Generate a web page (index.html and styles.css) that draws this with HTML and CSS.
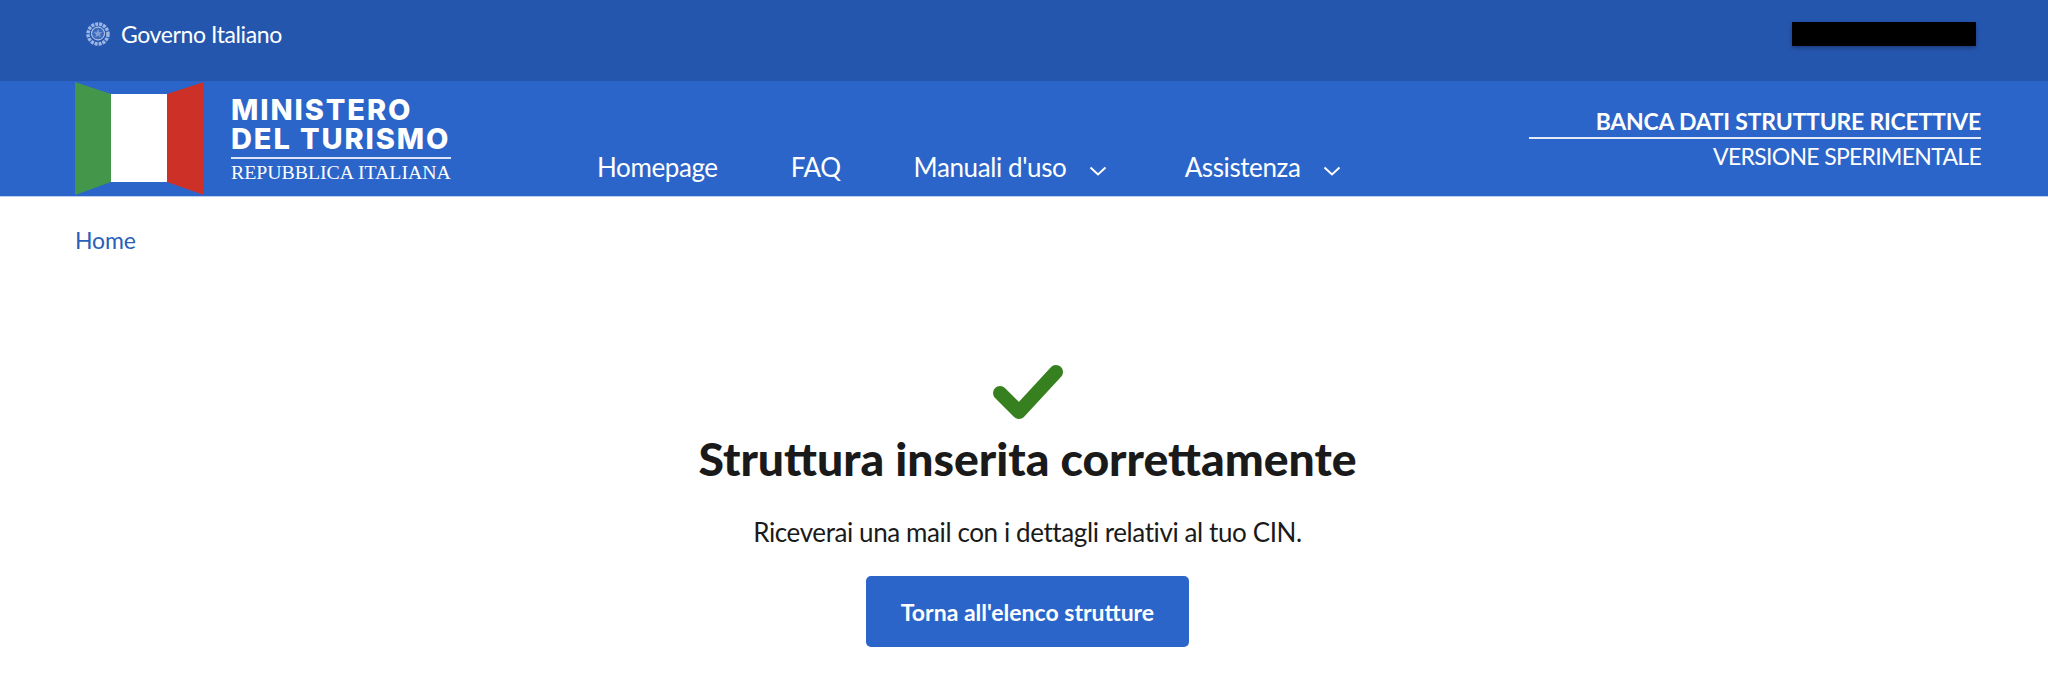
FILE: index.html
```html
<!DOCTYPE html>
<html lang="it">
<head>
    <meta charset="UTF-8">
    <meta name="viewport" content="width=device-width, initial-scale=1.0">
    <title>Ministero del Turismo</title>
    <link rel="stylesheet" href="styles.css">
</head>
<body>
    <div class="topbar">
        <div class="governo">
            <svg class="emblema" width="24" height="24" viewBox="0 0 24 24" fill="none">
                <circle cx="12" cy="12" r="10" stroke="#9db6e2" stroke-width="3.5" stroke-dasharray="3 1"/>
                <circle cx="12" cy="11.5" r="6.5" fill="#3f6cbc" stroke="#c9d7f0"/>
                <path d="M12 7l1.2 3.2h3.2l-2.6 2 1 3.2-2.8-2-2.8 2 1-3.2-2.6-2h3.2z" fill="#7f9fd6"/>
            </svg>
            <span>Governo Italiano</span>
        </div>
        <div class="utente"></div>
    </div>

    <header class="header">
        <div class="logo">
            <svg class="bandiera" width="130" height="115" viewBox="0 0 130 115">
                <polygon points="0,1 36,13 36,101 0,114" fill="#43964a"/>
                <rect x="36" y="13" width="56" height="88" fill="#fff"/>
                <polygon points="92,13 129,1 129,114 92,101" fill="#cd3027"/>
            </svg>
            <div class="logo-testo">
                <div class="ministero">MINISTERO<br>DEL TURISMO</div>
                <div class="repubblica">REPUBBLICA ITALIANA</div>
            </div>
        </div>
        <nav class="menu">
            <a href="#">Homepage</a>
            <a href="#">FAQ</a>
            <a href="#" class="tendina">Manuali d'uso
                <svg width="18" height="10" viewBox="0 0 18 10" fill="none"><path d="M1.5 1.5L9 8.5l7.5-7" stroke="#fff" stroke-width="2"/></svg>
            </a>
            <a href="#" class="tendina">Assistenza
                <svg width="18" height="10" viewBox="0 0 18 10" fill="none"><path d="M1.5 1.5L9 8.5l7.5-7" stroke="#fff" stroke-width="2"/></svg>
            </a>
        </nav>
        <div class="banca">
            <div class="banca-titolo">BANCA DATI STRUTTURE RICETTIVE</div>
            <div class="banca-sotto">VERSIONE SPERIMENTALE</div>
        </div>
    </header>

    <div class="breadcrumb"><a href="#">Home</a></div>

    <main class="esito">
        <svg class="spunta" width="70" height="54" viewBox="0 0 70 54" fill="none">
            <path d="M7 28l19 19L63 7" stroke="#37801f" stroke-width="14" stroke-linecap="round" stroke-linejoin="round"/>
        </svg>
        <h1>Struttura inserita correttamente</h1>
        <p>Riceverai una mail con i dettagli relativi al tuo CIN.</p>
        <button>Torna all'elenco strutture</button>
    </main>
</body>
</html>
```

FILE: styles.css
```css
body {
    font-family: Lato, "Open Sans", sans-serif;
    margin: 0;
    padding: 0;
    background-color: #fff;
    color: #1a1a1a;
}

a {
    color: inherit;
    text-decoration: none;
}

.topbar {
    height: 81px;
    background-color: #2556ae;
    color: #fff;
    display: flex;
    justify-content: space-between;
    align-items: flex-start;
    padding: 0 72px 0 86px;
    box-sizing: border-box;
}

.governo {
    display: flex;
    align-items: center;
    gap: 11px;
    height: 67px;
    font-size: 23px;
    letter-spacing: -0.4px;
}

.utente {
    width: 184px;
    height: 24px;
    margin-top: 22px;
    background-color: #000;
    box-shadow: 0 2px 4px rgba(0, 0, 0, 0.3);
}

.header {
    height: 115px;
    background-color: #2b65c9;
    border-bottom: 1px solid #b9cdee;
    color: #fff;
    display: flex;
    padding: 0 67px 0 75px;
}

.logo {
    display: flex;
    gap: 26px;
}

.logo-testo {
    width: 220px;
    padding-top: 14px;
}

.ministero {
    font-family: Inter, sans-serif;
    font-weight: 800;
    font-size: 29px;
    line-height: 29px;
    letter-spacing: 1.9px;
    padding-bottom: 4px;
    border-bottom: 2px solid #dce6f7;
    white-space: nowrap;
}

.repubblica {
    font-family: "Liberation Serif", serif;
    font-size: 19.8px;
    line-height: 22px;
    margin-top: 2px;
    white-space: nowrap;
}

.menu {
    display: flex;
    align-items: flex-end;
    gap: 73px;
    margin-left: 146px;
    padding-bottom: 11px;
    font-size: 26px;
    letter-spacing: -0.4px;
    line-height: 36px;
    flex: 1;
}

.tendina svg {
    margin-left: 16px;
    margin-right: 5px;
    margin-bottom: 1px;
}

.banca {
    width: 452px;
    text-align: right;
    padding-top: 25px;
}

.banca-titolo {
    font-size: 23px;
    font-weight: 700;
    letter-spacing: -0.23px;
    line-height: 31px;
    border-bottom: 2px solid #e3ebf9;
}

.banca-sotto {
    font-size: 23px;
    letter-spacing: -0.7px;
    line-height: 35px;
}

.breadcrumb {
    padding: 25px 75px 0;
    font-size: 23px;
    letter-spacing: -0.1px;
    line-height: 36px;
    color: #2b5fb8;
}

.esito {
    display: flex;
    flex-direction: column;
    align-items: center;
    padding: 107px 0 0 7px;
}

.spunta {
    margin-bottom: 10px;
}

h1 {
    margin: 0;
    font-size: 46.3px;
    line-height: 58px;
    font-weight: 900;
    color: #1a1a1a;
}

p {
    margin: 25px 0 0;
    font-size: 26px;
    letter-spacing: -0.4px;
    line-height: 40px;
}

button {
    margin-top: 24px;
    width: 323px;
    height: 71px;
    border: none;
    border-radius: 5px;
    background-color: #2b65c9;
    color: #fff;
    font-family: inherit;
    font-weight: 700;
    font-size: 23px;
}
```
